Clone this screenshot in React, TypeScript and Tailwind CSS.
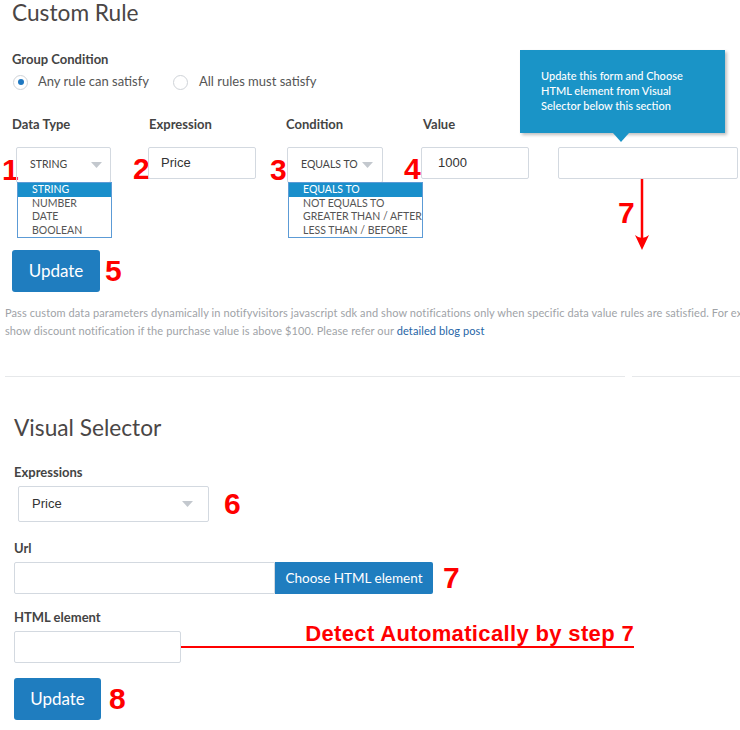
import React from "react";

const num = "font-['Liberation_Sans',Arial,sans-serif] font-bold text-[30px] leading-none text-[#ff0000]";

const Caret = ({ className = "" }: { className?: string }) => (
  <svg width="11" height="6" viewBox="0 0 11 6" className={className}>
    <path d="M0 0 L11 0 L5.5 6 Z" fill="#c3c8ce" />
  </svg>
);

const Options = ({ items, width }: { items: string[]; width: string }) => (
  <div className={`absolute left-0 top-full ${width} border border-[#5c9bd6] bg-white`}>
    {items.map((item, i) => (
      <div
        key={item}
        className={`pl-[14px] text-[10.5px] leading-[13.5px] whitespace-nowrap ${
          i === 0 ? "bg-[#1a8fcb] text-white" : "text-[#555]"
        }`}
      >
        {item}
      </div>
    ))}
  </div>
);

export default function App() {
  return (
    <div className="w-[740px] h-[730px] overflow-hidden bg-white font-['Lato','Open_Sans',sans-serif] text-[#444]">
      {/* custom rule */}
      <h1 className="pl-[12px] text-[22.7px] leading-[26px] text-[#4a4646]">Custom Rule</h1>

      <div className="mt-[25px] pl-[12px] text-[13px] leading-[16px] font-bold text-[#444]">Group Condition</div>

      <div className="mt-[7px] flex items-center h-[16px] pl-[13px] text-[13px] text-[#555]">
        <div className="flex items-center w-[160px]">
          <span className="w-[15px] h-[15px] rounded-full border border-[#cfd3d8] flex items-center justify-center">
            <span className="w-[6px] h-[6px] rounded-full bg-[#1f78c1]" />
          </span>
          <span className="ml-[10px]">Any rule can satisfy</span>
        </div>
        <span className="w-[15px] h-[15px] rounded-full border border-[#cfd3d8]" />
        <span className="ml-[11px]">All rules must satisfy</span>
      </div>

      <div className="mt-[26px] pl-[12px] grid grid-cols-[137px_137px_137px_137px] text-[13px] leading-[16px] font-bold text-[#444]">
        <span>Data Type</span>
        <span>Expression</span>
        <span>Condition</span>
        <span>Value</span>
      </div>

      <div className="mt-[15px] flex items-start h-[36px]">
        <span className={`${num} ml-[2px] w-[14px] mt-[8px]`}>1</span>
        <div className="relative w-[95px] h-[36px] border border-[#d3d9e0] rounded-[2px] flex items-center justify-between pl-[13px] pr-[8px]">
          <span className="text-[10.5px] text-[#444]">STRING</span>
          <Caret />
          <Options items={["STRING", "NUMBER", "DATE", "BOOLEAN"]} width="w-[95px] -left-px" />
        </div>

        <span className={`${num} ml-[22px] w-[15px] mt-[7px]`}>2</span>
        <div className="w-[108px] h-[32px] border border-[#d3d9e0] rounded-[2px] flex items-center pl-[12px] font-['Liberation_Sans',Arial,sans-serif] text-[13px] text-[#333]">
          Price
        </div>

        <span className={`${num} ml-[14px] w-[17px] mt-[8px]`}>3</span>
        <div className="relative w-[96px] h-[36px] border border-[#d3d9e0] rounded-[2px] flex items-center justify-between pl-[13px] pr-[9px]">
          <span className="text-[10.5px] text-[#444] whitespace-nowrap">EQUALS TO</span>
          <Caret />
          <Options items={["EQUALS TO", "NOT EQUALS TO", "GREATER THAN / AFTER", "LESS THAN / BEFORE"]} width="w-[135px] -left-px" />
        </div>

        <span className={`${num} ml-[21px] w-[17px] mt-[7px]`}>4</span>
        <div className="w-[108px] h-[32px] border border-[#d3d9e0] rounded-[2px] flex items-center pl-[16px] font-['Liberation_Sans',Arial,sans-serif] text-[13px] text-[#333]">
          1000
        </div>

        <div className="relative ml-[29px] w-[180px] h-[32px] border border-[#d3d9e0] rounded-[2px]">
          {/* tooltip */}
          <div className="absolute left-[-39px] top-[-98px] w-[205px] h-[83px] bg-[#1a94c7] shadow-[2px_2px_3px_rgba(0,0,0,0.25)] pt-[18px] pl-[21px] text-[11px] leading-[15px] font-medium text-white">
            Update this form and Choose
            <br />
            HTML element from Visual
            <br />
            Selector below this section
            <svg width="16" height="9" viewBox="0 0 16 9" className="absolute left-[93px] top-full">
              <path d="M0 0 L16 0 L8 9 Z" fill="#1a94c7" />
            </svg>
          </div>
          {/* arrow 7 */}
          <span className={`${num} absolute left-[59px] top-[50px]`}>7</span>
          <svg width="16" height="72" viewBox="0 0 16 72" className="absolute left-[75px] top-[31px]">
            <path d="M8 0 L8 60" stroke="#ff0000" strokeWidth="2.5" />
            <path d="M1 56 L8 71 L15 56 Q8 62 1 56 Z" fill="#ff0000" />
          </svg>
        </div>
      </div>

      <div className="mt-[67px] flex items-center pl-[12px]">
        <button className="w-[88px] h-[42px] rounded-[3px] bg-[#1f7dbf] text-white text-[17px]">Update</button>
        <span className={`${num} ml-[5px]`}>5</span>
      </div>

      <div className="mt-[12px] pl-[5px] text-[11px] leading-[18px] tracking-[0.1px] text-[#a0a3a7] whitespace-nowrap">
        <div>
          Pass custom data parameters dynamically in notifyvisitors javascript sdk and show notifications only when
          specific data value rules are satisfied. For example,
        </div>
        <div>
          show discount notification if the purchase value is above $100. Please refer our{" "}
          <span className="text-[#1f65a6]">detailed blog post</span>
        </div>
      </div>

      <div className="mt-[36px] flex gap-[7px] pl-[5px]">
        <div className="w-[620px] h-px bg-[#e6e8ea]" />
        <div className="flex-1 h-px bg-[#e6e8ea]" />
      </div>

      {/* visual selector */}
      <h2 className="mt-[38px] pl-[14px] text-[22.7px] leading-[26px] text-[#4a4646]">Visual Selector</h2>

      <div className="mt-[23px] pl-[14px] text-[13px] leading-[16px] font-bold text-[#444]">Expressions</div>

      <div className="mt-[6px] flex items-center pl-[18px]">
        <div className="w-[191px] h-[36px] border border-[#d3d9e0] rounded-[2px] flex items-center justify-between pl-[13px] pr-[15px]">
          <span className="font-['Liberation_Sans',Arial,sans-serif] text-[13px] text-[#333]">Price</span>
          <Caret />
        </div>
        <span className={`${num} ml-[15px]`}>6</span>
      </div>

      <div className="mt-[18px] pl-[14px] text-[13px] leading-[16px] font-bold text-[#444]">Url</div>

      <div className="mt-[6px] flex items-center pl-[14px]">
        <div className="w-[261px] h-[32px] border border-[#d3d9e0] rounded-l-[2px]" />
        <button className="w-[158px] h-[32px] rounded-r-[2px] bg-[#1f7dbf] text-white text-[13.5px]">
          Choose HTML element
        </button>
        <span className={`${num} ml-[10px]`}>7</span>
      </div>

      <div className="mt-[15px] pl-[14px] text-[13px] leading-[16px] font-bold text-[#444]">HTML element</div>

      <div className="mt-[6px] flex items-start pl-[14px]">
        <div className="w-[167px] h-[32px] border border-[#d3d9e0] rounded-[2px]" />
        <div className="-mt-[8px] w-[453px] flex flex-col">
          <span className="text-right font-['Liberation_Sans',Arial,sans-serif] font-bold text-[22px] leading-[22px] tracking-[0.35px] text-[#ff0000]">
            Detect Automatically by step 7
          </span>
          <div className="mt-[1px] h-[2px] bg-[#ff0000]" />
        </div>
      </div>

      <div className="mt-[15px] flex items-center pl-[14px]">
        <button className="w-[87px] h-[42px] rounded-[3px] bg-[#1f7dbf] text-white text-[17px]">Update</button>
        <span className={`${num} ml-[8px]`}>8</span>
      </div>
    </div>
  );
}
